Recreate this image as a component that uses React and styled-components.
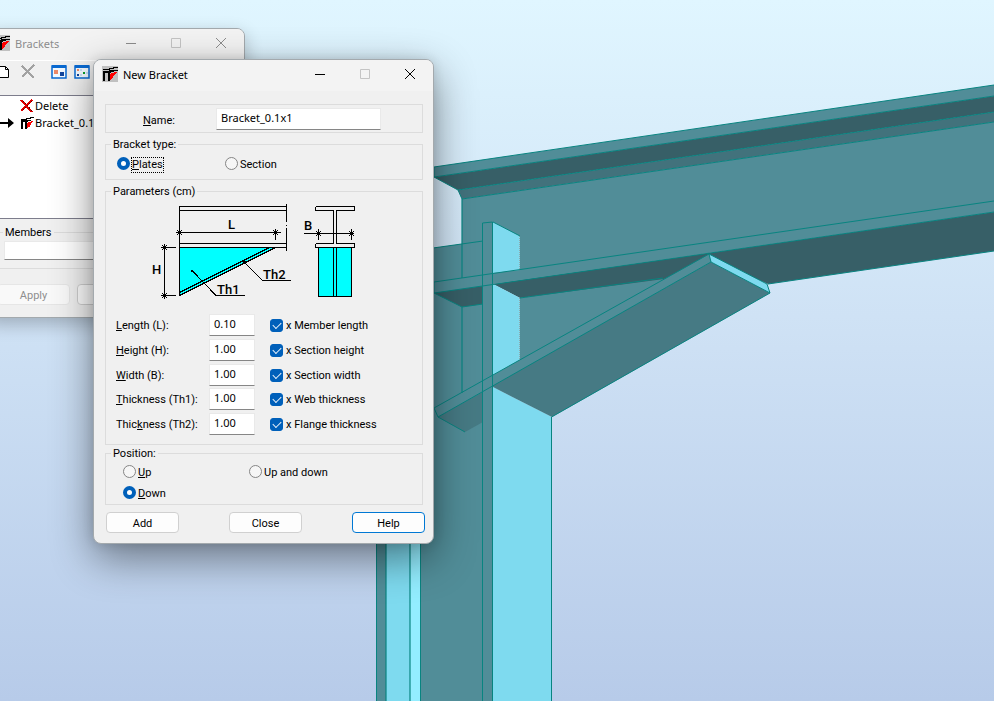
import React, { useState } from "react";
import styled, { createGlobalStyle, css } from "styled-components";

const parameters = [
  { id: "length", before: "", key: "L", after: "ength (L):", value: "0.10", factor: "x Member length" },
  { id: "height", before: "", key: "H", after: "eight (H):", value: "1.00", factor: "x Section height" },
  { id: "width", before: "", key: "W", after: "idth (B):", value: "1.00", factor: "x Section width" },
  { id: "th1", before: "", key: "T", after: "hickness (Th1):", value: "1.00", factor: "x Web thickness" },
  { id: "th2", before: "Thic", key: "k", after: "ness (Th2):", value: "1.00", factor: "x Flange thickness" },
];

function App() {
  return (
    <Desktop>
      <GlobalStyle />
      <Scene />
      <BracketsWindow />
      <NewBracketDialog />
    </Desktop>
  );
}

export default App;

function TitleBar({ title, inactive }) {
  return (
    <Title $inactive={inactive}>
      <BracketIcon size={16} background="#c0c0c0" />
      <h1>{title}</h1>
      <WindowButton aria-label="Minimize">
        <svg width="12" height="12" viewBox="0 0 12 12">
          <path d="M1 6.5h10" />
        </svg>
      </WindowButton>
      <WindowButton aria-label="Maximize" disabled>
        <svg width="12" height="12" viewBox="0 0 12 12">
          <path d="M1.5 1.5h9v9h-9z" />
        </svg>
      </WindowButton>
      <WindowButton aria-label="Close">
        <svg width="12" height="12" viewBox="0 0 12 12">
          <path d="M1 1l10 10M11 1L1 11" />
        </svg>
      </WindowButton>
    </Title>
  );
}

function BracketsWindow() {
  return (
    <ListWindow>
      <TitleBar title="Brackets" inactive />
      <Toolbar>
        <ToolButton aria-label="New">
          <svg width="16" height="16" viewBox="0 0 16 16">
            <path d="M2.5 2.5h9l3 3v8h-12z" fill="#fff" stroke="#000" />
            <path d="M11.5 2.5v3h3" fill="none" stroke="#000" />
          </svg>
        </ToolButton>
        <ToolButton aria-label="Delete" $gap="10px">
          <svg width="16" height="16" viewBox="0 0 16 16" shapeRendering="crispEdges">
            <path d="M2 2l12 12M14 1L2 13" stroke="#a2a2a2" strokeWidth="2" />
          </svg>
        </ToolButton>
        <ToolButton aria-label="Large icons" $gap="15px">
          <svg width="16" height="16" viewBox="0 0 16 16">
            <path d="M1 2h14v12H1z" fill="#f4faff" stroke="#0a6ad2" strokeWidth="1.5" />
            <path d="M1 1h14v3H1z" fill="#0a6ad2" />
            <path d="M3 6h4v4H3z" fill="#ee8a68" />
            <path d="M9 8h4v4H9z" fill="#12459c" />
          </svg>
        </ToolButton>
        <ToolButton aria-label="Small icons" $gap="7px">
          <svg width="16" height="16" viewBox="0 0 16 16">
            <path d="M1 2h14v12H1z" fill="#f4faff" stroke="#0a6ad2" strokeWidth="1.5" />
            <path d="M1 1h14v3H1z" fill="#0a6ad2" />
            <path d="M3 5h2v2H3z" fill="#ee8a68" />
            <path d="M9 8h2v2H9z" fill="#0a9c2c" />
            <path d="M3 10h2v2H3z" fill="#12459c" />
            <path d="M6 6h2M12 9h2M6 11h2" stroke="#9fc4ea" />
          </svg>
        </ToolButton>
      </Toolbar>
      <BracketList>
        <li>
          <svg width="14" height="14" viewBox="0 0 14 14" shapeRendering="crispEdges">
            <path d="M1 1l11 12M12 1L1 12" stroke="#e00000" strokeWidth="2" />
            <path d="M3 2l10 11M12 2L3 11" stroke="#500" strokeWidth="1" strokeDasharray="1 2" />
          </svg>
          Delete
        </li>
        <li>
          <CurrentArrow width="15" height="12" viewBox="0 0 15 12">
            <path d="M0 5h8V1l6 5-6 5V7H0z" />
          </CurrentArrow>
          <BracketIcon size={14} />
          Bracket_0.1x1
        </li>
      </BracketList>
      <MembersGroup>
        <legend>Members</legend>
        <TextInput aria-label="Members" defaultValue="" />
      </MembersGroup>
      <ListFooter>
        <Button disabled>Apply</Button>
        <Button>Close</Button>
        <Button>Help</Button>
      </ListFooter>
    </ListWindow>
  );
}

function NewBracketDialog() {
  const [type, setType] = useState("plates");
  const [position, setPosition] = useState("down");

  return (
    <Dialog>
      <TitleBar title="New Bracket" />
      <DialogBody>
        <NameGroup>
          <label htmlFor="name">
            <u>N</u>ame:
          </label>
          <TextInput id="name" defaultValue="Bracket_0.1x1" />
        </NameGroup>

        <TypeGroup>
          <legend>Bracket type:</legend>
          <Option>
            <Radio name="type" checked={type === "plates"} onChange={() => setType("plates")} />
            <Focused>
              <u>P</u>lates
            </Focused>
          </Option>
          <Option>
            <Radio name="type" checked={type === "section"} onChange={() => setType("section")} />
            Section
          </Option>
        </TypeGroup>

        <ParameterGroup>
          <legend>Parameters (cm)</legend>
          <BracketDiagram />
          <ParameterRows>
            {parameters.map(({ id, before, key, after, value, factor }) => (
              <ParameterRow key={id}>
                <label htmlFor={id}>
                  {before}
                  <u>{key}</u>
                  {after}
                </label>
                <TextInput id={id} defaultValue={value} />
                <Option>
                  <Checkbox defaultChecked />
                  {factor}
                </Option>
              </ParameterRow>
            ))}
          </ParameterRows>
        </ParameterGroup>

        <PositionGroup>
          <legend>Position:</legend>
          <Option>
            <Radio name="position" checked={position === "up"} onChange={() => setPosition("up")} />
            <span>
              <u>U</u>p
            </span>
          </Option>
          <Option>
            <Radio name="position" checked={position === "both"} onChange={() => setPosition("both")} />
            Up and down
          </Option>
          <Option>
            <Radio name="position" checked={position === "down"} onChange={() => setPosition("down")} />
            <span>
              <u>D</u>own
            </span>
          </Option>
        </PositionGroup>

        <DialogFooter>
          <Button>Add</Button>
          <Button>Close</Button>
          <Button $primary>Help</Button>
        </DialogFooter>
      </DialogBody>
    </Dialog>
  );
}

function BracketIcon({ size, background = "none" }) {
  return (
    <svg width={size} height={size} viewBox="0 0 16 16" shapeRendering="crispEdges">
      <path d="M0 0h16v16H0z" fill={background} />
      <path d="M1 3h6V2h4V1h5v1h-4v1H8v1H1z" fill="#000" />
      <path d="M1 5h6V4h9v1h-4v1H9v1H8v8H6V7H3v8H1z" fill="#000" />
      <path d="M9 7h3V6h3v1h-1v1h-1v1h-1v1h-1v2h-1v1H9v1H8V8h1z" fill="#f00" />
    </svg>
  );
}

/* Side view and cross section with the dimensions that the rows below set */
function BracketDiagram() {
  return (
    <Diagram width="210" height="100" viewBox="0 0 210 100">
      <g shapeRendering="crispEdges">
        <path d="M29.5 47.5h96l-96 48z" fill="#0ff" stroke="#000" />
        <path d="M119.5 47.5l-90 45" />
        <path d="M29.5 6.5h107v4h-107zM29.5 43.5h107v4h-107zM29.5 6.5v89" />
        <path d="M136.5 4v18M136.5 25v1M136.5 28v23" />
        <path d="M26 32.5h105M29.5 29v7M125.5 29v11M27 35l5-5M123 35l5-5M27 30l5 5M123 30l5 5" />
        <path d="M14.5 44v55M11 47.5h15M11 95.5h15M12 50l5-5M12 98l5-5M12 45l5 5M12 93l5 5" />
        <path d="M42 70.5l24 25h29M94.5 62.5l18 18H141" />
        <path d="M41 70h2v2h-2zM93 61h3v3h-3z" fill="#000" stroke="none" />
        <path d="M168.5 47.5h33v49h-33z" fill="#0ff" stroke="#000" />
        <path d="M183.5 47.5v49M186.5 47.5v49" />
        <path d="M183.5 10v34M186.5 10v34" />
        <path d="M165.5 6.5h39v4h-18M183.5 10.5h-18v-4M165.5 43.5h18M186.5 43.5h18v4h-39v-4" />
        <path d="M154 33.5h50M168.5 29v11M201.5 29v11M166 36l5-5M199 36l5-5M166 31l5 5M199 31l5 5" />
      </g>
      <text x="78" y="29">L</text>
      <text x="2" y="74">H</text>
      <text x="154" y="30">B</text>
      <text x="67" y="94">Th1</text>
      <text x="113" y="79">Th2</text>
    </Diagram>
  );
}

/* Rafter, column and haunch in the model view */
function Scene() {
  return (
    <SceneSvg viewBox="0 0 994 701" preserveAspectRatio="xMinYMin slice" aria-hidden="true">
      <g fill="#518d98">
        <path d="M434 167L994 85V96L434 177z" />
        <path d="M462 199L994 122V212L493 284V375L434 408V248L462 244z" />
        <path d="M433 248L483 241V701H433z" />
        <path d="M376 530h10v171h-10zM420 530h63v171h-63z" />
        <path d="M520 298L664 277 709 254 711 262 520 370z" />
      </g>
      <path d="M434 177L994 96V112L458 190z" fill="#375f67" />
      <path d="M458 190L994 112V122L462 199z" fill="#42727c" />
      <path d="M493 284L994 212V251L768 284 709 258 664 279 520 298z" fill="#375f67" />
      <path d="M434 293L483 286V304L462 307z" fill="#375f67" />
      <path d="M438 417L483 392V422L465 432z" fill="#467a84" />
      <path d="M386 530h24v171h-24z" fill="#7edaef" />
      <path d="M410 530h10v171h-10z" fill="#93edff" />
      <path d="M493 222L520 236V270L493 273zM493 284L520 298V362L493 378z" fill="#7edaef" />
      <path d="M493 387L552 417V701H493z" fill="#7edaef" />
      <path d="M483 223L493 222V701H483z" fill="#518d98" />
      <path d="M493 385L711 262 770 293 552 417 493 387z" fill="#467a84" />
      <path d="M434 408L709 254 711 262 438 417z" fill="#518d98" />
      <path d="M709 254L767 284 770 293 711 262z" fill="#7edaef" />
      <path d="M519.5 236v34M519.5 298v61" stroke="#8aa9ae" strokeDasharray="1 1" />
      <g fill="none" stroke="#088480">
        <path d="M994 85L434 167V177L994 96M994 112L458 190 434 177M458 190L462 199 994 122" />
        <path d="M994 201L434 282V293L994 212" />
        <path d="M433 248L483 241M434 293L462 307 483 304M520 298L663 278M768 284L994 251" />
        <path d="M482.5 701V223L492.5 222V701M493 222L520 236" />
        <path d="M434 408L709 254 711 262 438 417zM438 417L465 432" />
        <path d="M709 254L767 284 770 293 711 262M770 293L551.5 417V701" />
        <path d="M376.5 530v171M420.5 530v171" />
      </g>
      <g fill="none" stroke="#088480" strokeWidth="2" opacity="0.6">
        <path d="M462 199v79M462 307v86M386 530v171M410 530v171" />
      </g>
    </SceneSvg>
  );
}

const GlobalStyle = createGlobalStyle`
  * {
    box-sizing: border-box;
  }

  body {
    margin: 0;
    color: #000;
    font: 11px/16px Tahoma, Roboto, sans-serif;
  }

  button,
  input {
    margin: 0;
    color: inherit;
    font: inherit;
  }

  u {
    text-underline-offset: 1px;
  }
`;

const Desktop = styled.main`
  position: relative;
  height: 100vh;
  overflow: hidden;
  background: linear-gradient(#e0f6ff, #cfe2f5 45%, #b7cbe9);
`;

const SceneSvg = styled.svg`
  display: block;
  width: 100%;
  height: 100%;
`;

const windowFrame = css`
  position: absolute;
  display: flex;
  flex-direction: column;
  overflow: hidden;
  border: 1px solid #a3a9ad;
  border-radius: 8px;
  background: #f0f0f0;
`;

const ListWindow = styled.section`
  ${windowFrame}
  top: 28px;
  left: -15px;
  width: 260px;
  box-shadow: 0 6px 18px rgba(0, 0, 0, 0.24);
`;

const Dialog = styled.section`
  ${windowFrame}
  top: 59px;
  left: 93px;
  width: 341px;
  box-shadow: 0 14px 42px rgba(0, 0, 0, 0.45), 0 0 12px rgba(0, 0, 0, 0.12);
`;

const Title = styled.header`
  display: flex;
  align-items: center;
  height: 31px;
  padding: 0 1px 3px 8px;
  background: #f3f3f3;
  color: ${({ $inactive }) => ($inactive ? "#8c8c8c" : "#000")};

  > h1 {
    flex: 1;
    margin: 0 0 0 5px;
    padding-top: 1px;
    font: 11px/16px "Segoe UI", "Noto Sans", sans-serif;
  }
`;

const WindowButton = styled.button`
  display: flex;
  align-items: center;
  justify-content: center;
  width: 45px;
  height: 28px;
  padding: 0;
  border: 0;
  background: none;

  &:disabled {
    color: #c4c4c4;
  }

  > svg {
    fill: none;
    stroke: currentColor;
  }
`;

const Toolbar = styled.div`
  display: flex;
  align-items: center;
  height: 35px;
  padding: 0 0 12px 8px;
  border-top: 1px solid #fff;
`;

const ToolButton = styled.button`
  display: flex;
  margin-left: ${({ $gap }) => $gap || "0"};
  padding: 0;
  border: 0;
  background: none;
`;

const BracketList = styled.ul`
  height: 124px;
  margin: 0;
  padding: 1px 0;
  border: solid #7d7d8c;
  border-width: 1px 0;
  background: #fff;
  font-family: Tahoma, "Noto Sans", sans-serif;
  list-style: none;

  > li {
    display: flex;
    align-items: center;
    gap: 1px;
    height: 17px;
    padding-left: 34px;
    white-space: nowrap;
  }
`;

const CurrentArrow = styled.svg`
  flex: none;
  margin: 0 4px 0 -20px;
`;

const TextInput = styled.input`
  height: 22px;
  min-width: 0;
  padding: 0 4px 3px;
  border: 1px solid #e9e9e9;
  border-bottom-color: #868686;
  border-radius: 0;
  outline: 0;
  background: #fff;
  font-family: Tahoma, "Noto Sans", sans-serif;
`;

/* The legend keeps its place whatever inset the content has */
const Group = styled.fieldset`
  --inset: 10px;
  min-width: 0;
  margin: 0;
  padding: 0 var(--inset);
  border: 1px solid #dcdcdc;

  > legend {
    height: 14px;
    margin-left: calc(5px - var(--inset));
    padding: 0 2px;
  }
`;

const MembersGroup = styled(Group)`
  display: flex;
  margin: 6px 6px 0 11px;
  padding-top: 2px;
  padding-bottom: 8px;
  --inset: 6px;

  > input {
    flex: 1;
    height: 19px;
  }
`;

const ListFooter = styled.footer`
  display: flex;
  gap: 7px;
  padding: 15px 11px 12px;
`;

const Button = styled.button`
  width: 73px;
  height: 21px;
  padding: 2px 0 0;
  border: 1px solid ${({ $primary }) => ($primary ? "#0078d4" : "#d0d0d0")};
  border-radius: 4px;
  background: #fdfdfd;

  &:disabled {
    border-color: #e6e6e6;
    background: #f9f9f9;
    color: #8e8e8e;
  }
`;

const DialogBody = styled.form`
  display: flex;
  flex-direction: column;
  padding: 13px 10px 10px 11px;
`;

const NameGroup = styled.div`
  display: flex;
  padding: 3px 41px 2px 37px;
  border: 1px solid #dcdcdc;

  > label {
    width: 73px;
    padding-top: 5px;
  }

  > input {
    flex: 1;
  }
`;

const TypeGroup = styled(Group)`
  --inset: 11px;
  display: grid;
  grid-template-columns: 108px 1fr;
  margin-top: 4px;
  padding-top: 5px;
  padding-bottom: 7px;
`;

const ParameterGroup = styled(Group)`
  margin-top: 4px;
  padding-top: 2px;
  padding-bottom: 9px;
`;

const PositionGroup = styled(Group)`
  --inset: 17px;
  display: grid;
  grid-template-columns: 126px 1fr;
  row-gap: 5px;
  margin-top: 1px;
  padding-top: 4px;
  padding-bottom: 3px;
`;

const Option = styled.label`
  display: flex;
  align-items: flex-start;
  gap: 2px;
  height: 16px;
  line-height: 18px;
`;

const Focused = styled.span`
  margin-top: 2px;
  outline: 1px dotted #000;
  line-height: 14px;
`;

const Radio = styled.input.attrs({ type: "radio" })`
  appearance: none;
  flex: none;
  width: 13px;
  height: 13px;
  margin-top: 1px;
  border: 1px solid #858585;
  border-radius: 50%;
  background: #f6f6f6;

  &:checked {
    border: 4px solid #0060ba;
    background: #fff;
  }
`;

const Checkbox = styled.input.attrs({ type: "checkbox" })`
  appearance: none;
  display: flex;
  flex: none;
  justify-content: center;
  width: 13px;
  height: 13px;
  margin: 2px 1px 0 0;
  border: 1px solid #858585;
  border-radius: 3px;
  background: #f6f6f6;

  &:checked {
    border-color: #0060ba;
    background: #0060ba;
  }

  &:checked::after {
    width: 7px;
    height: 4px;
    margin-top: 2px;
    border: solid #e8f1fa;
    border-width: 0 0 1px 1px;
    transform: rotate(-45deg);
    content: "";
  }
`;

const Diagram = styled.svg`
  display: block;
  margin-left: 34px;
  fill: none;
  stroke: #000;

  > text {
    fill: #000;
    stroke: none;
    font: 500 13px Roboto, sans-serif;
  }
`;

const ParameterRows = styled.div`
  display: flex;
  flex-direction: column;
  justify-content: space-between;
  height: 121px;
  margin-top: 14px;
`;

const ParameterRow = styled.div`
  display: grid;
  grid-template-columns: 93px 46px 1fr;
  align-items: center;

  > label {
    line-height: 18px;
  }

  > label:first-child {
    padding-top: 2px;
  }

  > ${Option} {
    margin-left: 15px;
  }
`;

const DialogFooter = styled.footer`
  display: flex;
  justify-content: space-between;
  margin: 7px -2px 0 1px;
`;
